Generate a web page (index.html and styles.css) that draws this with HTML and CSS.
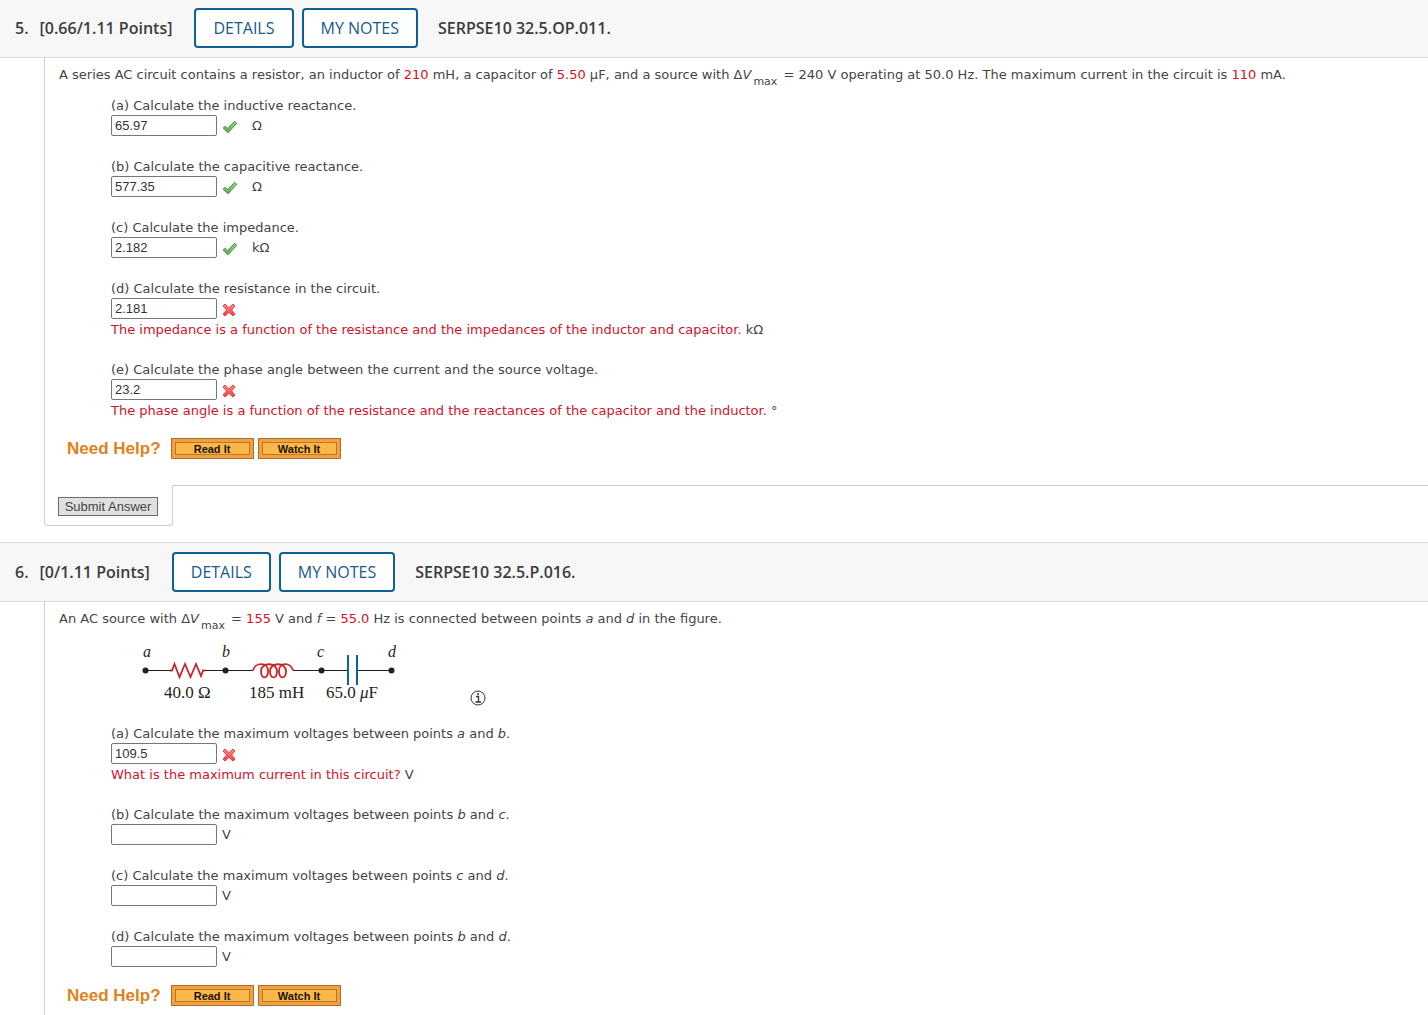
FILE: index.html
```html
<!DOCTYPE html>
<html lang="en">
<head>
<meta charset="utf-8">
<title>AC Circuits Assignment</title>
<link rel="stylesheet" href="styles.css">
</head>
<body>
<svg class="defs" aria-hidden="true">
  <defs>
    <linearGradient id="green" x1="0" y1="0" x2="0" y2="1"><stop offset="0" stop-color="#8fd47f"/><stop offset="1" stop-color="#5fae58"/></linearGradient>
    <linearGradient id="red" x1="0" y1="0" x2="0" y2="1"><stop offset="0" stop-color="#ff8a85"/><stop offset="1" stop-color="#ee3f46"/></linearGradient>
    <symbol id="check" viewBox="0 0 16 14"><path d="M1 8.2 3.2 6.2 5.6 8.6 12.6 1.3 14.8 3.3 6 12.8Z" fill="url(#green)" stroke="#4c9148" stroke-width="1" stroke-linejoin="round"/></symbol>
    <symbol id="cross" viewBox="0 0 14 14"><path d="M3 1 7 4.7 11 1 13 3 9.6 7 13 11 11 13 7 9.5 3 13 1 11 4.6 7 1 3Z" fill="url(#red)" stroke="#d9474c" stroke-width="1" stroke-linejoin="round"/></symbol>
  </defs>
</svg>

<section class="question">
  <header class="bar">
    <h2 class="title"><span class="number">5.</span><span class="points">[0.66/1.11 Points]</span></h2>
    <button class="outline" type="button">DETAILS</button>
    <button class="outline" type="button">MY NOTES</button>
    <span class="source">SERPSE10 32.5.OP.011.</span>
  </header>
  <form>
    <div class="body">
      <p class="prompt">A series AC circuit contains a resistor, an inductor of <span class="value">210</span> mH, a capacitor of <span class="value">5.50</span> µF, and a source with Δ<i>V</i><sub>max</sub> = 240 V operating at 50.0 Hz. The maximum current in the circuit is <span class="value">110</span> mA.</p>
      <div class="parts">
        <div class="part">
          <label for="q5a">(a) Calculate the inductive reactance.</label>
          <div class="answer"><input id="q5a" type="text" value="65.97"><svg class="check" role="img" aria-label="Correct"><use href="#check"/></svg><span>Ω</span></div>
        </div>
        <div class="part">
          <label for="q5b">(b) Calculate the capacitive reactance.</label>
          <div class="answer"><input id="q5b" type="text" value="577.35"><svg class="check" role="img" aria-label="Correct"><use href="#check"/></svg><span>Ω</span></div>
        </div>
        <div class="part">
          <label for="q5c">(c) Calculate the impedance.</label>
          <div class="answer"><input id="q5c" type="text" value="2.182"><svg class="check" role="img" aria-label="Correct"><use href="#check"/></svg><span>kΩ</span></div>
        </div>
        <div class="part">
          <label for="q5d">(d) Calculate the resistance in the circuit.</label>
          <div class="answer"><input id="q5d" type="text" value="2.181"><svg class="cross" role="img" aria-label="Incorrect"><use href="#cross"/></svg></div>
          <p><span class="feedback">The impedance is a function of the resistance and the impedances of the inductor and capacitor.</span> kΩ</p>
        </div>
        <div class="part">
          <label for="q5e">(e) Calculate the phase angle between the current and the source voltage.</label>
          <div class="answer"><input id="q5e" type="text" value="23.2"><svg class="cross" role="img" aria-label="Incorrect"><use href="#cross"/></svg></div>
          <p><span class="feedback">The phase angle is a function of the resistance and the reactances of the capacitor and the inductor.</span> °</p>
        </div>
      </div>
      <div class="help"><strong>Need Help?</strong><button type="button">Read It</button><button type="button">Watch It</button></div>
    </div>
    <div class="footer">
      <div class="tab"><button class="submit" type="button">Submit Answer</button></div>
      <div class="rule"></div>
    </div>
  </form>
</section>

<section class="question">
  <header class="bar">
    <h2 class="title"><span class="number">6.</span><span class="points">[0/1.11 Points]</span></h2>
    <button class="outline" type="button">DETAILS</button>
    <button class="outline" type="button">MY NOTES</button>
    <span class="source">SERPSE10 32.5.P.016.</span>
  </header>
  <form class="body">
    <p class="prompt">An AC source with Δ<i>V</i><sub>max</sub> = <span class="value">155</span> V and <i>f</i> = <span class="value">55.0</span> Hz is connected between points <i>a</i> and <i>d</i> in the figure.</p>
    <div class="figure">
      <svg class="circuit" viewBox="0 0 260 70" role="img" aria-label="Resistor, inductor and capacitor in series">
        <path d="M9 30.500H35M67 30.500H117M157 30.500H211M221 30.500H255" stroke="#231f20" fill="none"/>
        <path d="M34 30.500H36L38.500 24 43.500 37 49 24 54.500 37 60 24 65 36 67 30.500H69" fill="none" stroke="#c9252b" stroke-width="1.800"/>
        <path d="M117 30.500C119 22 132 22 132 31C132 39.500 125 39.500 125 31C125 22 141 22 141 31C141 39.500 134 39.500 134 31C134 22 150 22 150 31C150 39.500 143 39.500 143 31C143 22 155 22 157 30.500" fill="none" stroke="#c9252b" stroke-width="1.800"/>
        <path d="M212 15V45M221 15V45" stroke="#0f639c" stroke-width="2"/>
        <g fill="#231f20"><circle cx="9.500" cy="30.500" r="3"/><circle cx="89.500" cy="30.500" r="3"/><circle cx="185.500" cy="30.500" r="3"/><circle cx="255.500" cy="30.500" r="3"/></g>
        <g class="node"><text x="7" y="17">a</text><text x="86" y="17">b</text><text x="181" y="17">c</text><text x="252" y="17">d</text></g>
        <g class="quantity"><text x="28" y="58">40.0 Ω</text><text x="113" y="58">185 mH</text><text x="190" y="58">65.0 <tspan font-style="italic">μ</tspan>F</text></g>
      </svg>
      <svg class="info" viewBox="0 0 16 16" role="img" aria-label="Figure information"><circle cx="8" cy="8" r="7" fill="none" stroke="#333"/><path d="M6 6.500H8.500V12M5.500 12H11" fill="none" stroke="#333" stroke-width="1.300"/><circle cx="8" cy="4" r="1" fill="#333"/></svg>
    </div>
    <div class="parts">
      <div class="part">
        <label for="q6a">(a) Calculate the maximum voltages between points <i>a</i> and <i>b</i>.</label>
        <div class="answer"><input id="q6a" type="text" value="109.5"><svg class="cross" role="img" aria-label="Incorrect"><use href="#cross"/></svg></div>
        <p><span class="feedback">What is the maximum current in this circuit?</span> V</p>
      </div>
      <div class="part">
        <label for="q6b">(b) Calculate the maximum voltages between points <i>b</i> and <i>c</i>.</label>
        <div class="answer"><input id="q6b" type="text"><span>V</span></div>
      </div>
      <div class="part">
        <label for="q6c">(c) Calculate the maximum voltages between points <i>c</i> and <i>d</i>.</label>
        <div class="answer"><input id="q6c" type="text"><span>V</span></div>
      </div>
      <div class="part">
        <label for="q6d">(d) Calculate the maximum voltages between points <i>b</i> and <i>d</i>.</label>
        <div class="answer"><input id="q6d" type="text"><span>V</span></div>
      </div>
    </div>
    <div class="help"><strong>Need Help?</strong><button type="button">Read It</button><button type="button">Watch It</button></div>
  </form>
</section>
</body>
</html>
```
FILE: styles.css
```css
* { box-sizing: border-box; }

body {
  margin: 0;
  background: #fff;
  color: #444;
  font: 13px/20px Verdana, "DejaVu Sans", sans-serif;
}

p, h2 { margin: 0; }

/* Shared icon symbols; must stay rendered so their gradients resolve. */
.defs {
  position: absolute;
  width: 0;
  height: 0;
}

.bar {
  display: flex;
  align-items: center;
  padding: 9px 15px;
  background: #f7f7f7;
  border-top: 1px solid #ddd;
  border-bottom: 1px solid #ddd;
  color: #3c3c3c;
  font: 600 16px/24px "Open Sans", sans-serif;
}

.question:first-of-type .bar {
  border-top: 0;
  padding-top: 8px;
}

.title {
  display: flex;
  gap: 11px;
  margin-right: 22px;
  font: inherit;
}

.outline {
  height: 40px;
  margin-right: 8px;
  padding: 0 17px;
  background: #fff;
  border: 2px solid #0f5f94;
  border-radius: 4px;
  color: #17598c;
  font: 500 16px/24px "Open Sans", sans-serif;
}

.source { margin-left: 12px; }

.body {
  margin-left: 44px;
  padding: 7px 14px 26px;
  border-left: 1px solid #ccc;
}

.prompt { margin-bottom: 10px; }

.value { color: #d8101c; }

sub {
  margin: 0 2px;
  font-size: 11px;
  line-height: 0;
  vertical-align: -6px;
}

.parts {
  display: flex;
  flex-direction: column;
  gap: 20px;
  margin-left: 52px;
}

.part label,
.part p {
  display: block;
  padding-top: 2px;
  line-height: 18px;
}

.answer {
  display: flex;
  align-items: center;
  gap: 5px;
}

.answer input {
  width: 106px;
  height: 21px;
  padding: 0 3px 1px;
  border: 1px solid #767676;
  border-radius: 2px;
  background: #fff;
  color: #333;
  font: 13px/16px Arial, "Liberation Sans", sans-serif;
}

.check {
  width: 16px;
  height: 14px;
  margin: 2px 9px 0 0;
}

.cross {
  width: 14px;
  height: 14px;
  margin-top: 2px;
}

.feedback { color: #d0142a; }

.help {
  display: flex;
  align-items: center;
  gap: 4px;
  margin: 18px 0 0 8px;
}

.help strong {
  margin-right: 6px;
  color: #e0821b;
  font: bold 17px/21px Arial, "Liberation Sans", sans-serif;
}

.help button {
  width: 83px;
  height: 21px;
  padding: 2px 0 0;
  border: 1px solid #a8702c;
  background: #fbb848;
  box-shadow: inset 0 0 0 3px #f2a040, inset 0 0 0 4px #b87a2a;
  color: #1c1200;
  font: bold 11px/17px Arial, "Liberation Sans", sans-serif;
}

.footer {
  display: flex;
  margin: 0 0 16px 44px;
}

.tab {
  padding: 12px 14px 9px 13px;
  border: solid #ccc;
  border-width: 0 1px 1px;
  border-radius: 0 0 4px 4px;
}

.submit {
  display: block;
  width: 100px;
  height: 19px;
  padding: 0;
  border: 1px solid #6b6b6b;
  background: #e0e0e0;
  color: #444;
  font: 13px/17px Arial, "Liberation Sans", sans-serif;
}

.rule {
  flex: 1;
  border-top: 1px solid #ccc;
}

.figure {
  display: flex;
  align-items: flex-end;
  gap: 74px;
  margin: 0 0 13px 77px;
  padding-top: 1px;
}

.circuit {
  width: 260px;
  height: 70px;
}

.info {
  width: 16px;
  height: 16px;
  margin-bottom: 4px;
}

.node, .quantity {
  fill: #231f20;
  font: 16px "Liberation Serif", serif;
}

.node { font-style: italic; }

.quantity { font-size: 17px; }
```
